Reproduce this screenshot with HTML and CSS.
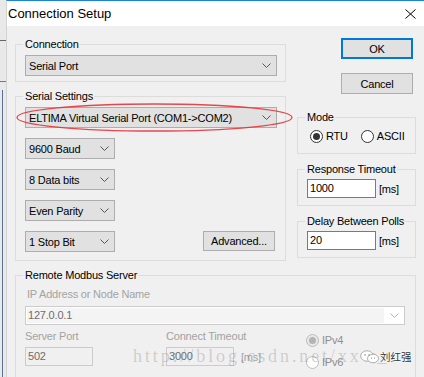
FILE: index.html
```html
<!DOCTYPE html>
<html lang="en">
<head>
<meta charset="utf-8">
<title>Connection Setup</title>
<link rel="stylesheet" href="styles.css">
</head>
<body>
<div class="desk">
  <div class="strip"></div>
  <div class="window">
    <div class="titlebar">
      <span class="title">Connection Setup</span>
      <svg class="close" width="11" height="10" viewBox="0 0 11 10"><path d="M0.5 0.5L10.5 9.5M10.5 0.5L0.5 9.5" stroke="#000" stroke-width="1" fill="none"/></svg>
    </div>
    <div class="client">
      <div class="top">
        <div class="col-left">
          <fieldset class="group g-conn">
            <legend>Connection</legend>
            <div class="combo first"><span>Serial Port</span><svg class="chev" width="9" height="5" viewBox="0 0 9 5"><path d="M0.5 0.5L4.5 4.5L8.5 0.5" stroke="#555" fill="none"/></svg></div>
          </fieldset>
          <fieldset class="group g-serial">
            <legend>Serial Settings</legend>
            <div class="combo first"><span>ELTIMA Virtual Serial Port (COM1-&gt;COM2)</span><svg class="chev" width="9" height="5" viewBox="0 0 9 5"><path d="M0.5 0.5L4.5 4.5L8.5 0.5" stroke="#555" fill="none"/></svg></div>
            <div class="combo small"><span>9600 Baud</span><svg class="chev" width="9" height="5" viewBox="0 0 9 5"><path d="M0.5 0.5L4.5 4.5L8.5 0.5" stroke="#555" fill="none"/></svg></div>
            <div class="combo small"><span>8 Data bits</span><svg class="chev" width="9" height="5" viewBox="0 0 9 5"><path d="M0.5 0.5L4.5 4.5L8.5 0.5" stroke="#555" fill="none"/></svg></div>
            <div class="combo small"><span>Even Parity</span><svg class="chev" width="9" height="5" viewBox="0 0 9 5"><path d="M0.5 0.5L4.5 4.5L8.5 0.5" stroke="#555" fill="none"/></svg></div>
            <div class="row-last">
              <div class="combo small flat"><span>1 Stop Bit</span><svg class="chev" width="9" height="5" viewBox="0 0 9 5"><path d="M0.5 0.5L4.5 4.5L8.5 0.5" stroke="#555" fill="none"/></svg></div>
              <button class="btn btn-adv" type="button">Advanced...</button>
            </div>
          </fieldset>
        </div>
        <div class="col-right">
          <button class="btn btn-ok" type="button">OK</button>
          <button class="btn btn-cancel" type="button">Cancel</button>
          <fieldset class="group g-mode">
            <legend>Mode</legend>
            <div class="radios">
              <span class="radio checked"></span><span class="rlabel">RTU</span>
              <span class="radio second"></span><span class="rlabel">ASCII</span>
            </div>
          </fieldset>
          <fieldset class="group g-field">
            <legend>Response Timeout</legend>
            <div class="field-row"><div class="input">1000</div><span class="unit">[ms]</span></div>
          </fieldset>
          <fieldset class="group g-field">
            <legend>Delay Between Polls</legend>
            <div class="field-row"><div class="input">20</div><span class="unit">[ms]</span></div>
          </fieldset>
        </div>
      </div>
      <fieldset class="group g-remote">
        <legend>Remote Modbus Server</legend>
        <div class="dlabel ip-label">IP Address or Node Name</div>
        <div class="ipcombo">
          <div class="ipval">127.0.0.1</div>
          <div class="ipdrop"><svg width="9" height="5" viewBox="0 0 9 5"><path d="M0.5 0.5L4.5 4.5L8.5 0.5" stroke="#b5b5b5" fill="none"/></svg></div>
        </div>
        <div class="row3">
          <div class="col-a">
            <div class="dlabel">Server Port</div>
            <div class="dinput">502</div>
          </div>
          <div class="col-b">
            <div class="dlabel">Connect Timeout</div>
            <div class="field-row dis-row"><div class="dinput">3000</div><span class="dunit">[ms]</span></div>
          </div>
          <div class="col-c">
            <div class="drow first"><span class="radio dis checked"></span><span class="drlabel">IPv4</span></div>
            <div class="drow"><span class="radio dis"></span><span class="drlabel">IPv6</span></div>
          </div>
        </div>
      </fieldset>
    </div>
  </div>

  <svg class="mark" width="285" height="36" viewBox="0 0 285 36"><ellipse cx="139.5" cy="17.5" rx="137.5" ry="13.5" fill="none" stroke="#e6343a" stroke-width="1.3" stroke-opacity="0.9"/></svg>
  <div class="watermark">http://blog.csdn.net/xxw_</div>
  <svg class="wlogo" width="20" height="14" viewBox="0 0 20 14"><ellipse cx="7" cy="6" rx="6.3" ry="5.2" fill="#fff" stroke="#9a9a9a" stroke-width="0.8"/><ellipse cx="13" cy="8.5" rx="5.5" ry="4.3" fill="#fff" stroke="#9a9a9a" stroke-width="0.8"/><circle cx="5" cy="5" r="0.8" fill="#888"/><circle cx="9" cy="5" r="0.8" fill="#888"/><circle cx="11.5" cy="8" r="0.6" fill="#888"/><circle cx="14.5" cy="8" r="0.6" fill="#888"/></svg>
  <div class="wname">刘红强</div>
</div>
</body>
</html>
```

FILE: styles.css
```css
* { box-sizing: border-box; }

html, body {
  margin: 0;
  padding: 0;
}

body {
  width: 424px;
  height: 377px;
  overflow: hidden;
  background: #e9e9e9;
  font-family: "Liberation Sans", Arial, sans-serif;
  font-size: 11px;
  color: #000;
}

.desk {
  position: relative;
  display: flex;
  height: 100%;
  overflow: hidden;
}

.strip {
  width: 6px;
  flex: none;
  background:
    linear-gradient(#58709a, #58709a) 2px 90px / 1px 100% no-repeat,
    linear-gradient(#666, #666) 0 40px / 6px 1px no-repeat,
    linear-gradient(#777, #777) 0 81px / 6px 1px no-repeat,
    #e9e9e9;
}

.window {
  flex: 1;
  min-width: 0;
  display: flex;
  flex-direction: column;
  background: #f0f0f0;
  border-left: 1px solid #d2d2d2;
  border-top: 1px solid #1883d7;
  overflow: hidden;
}

.titlebar {
  height: 25px;
  flex: none;
  background: #fff;
  display: flex;
  align-items: center;
  justify-content: space-between;
  padding-left: 1px;
  padding-right: 8px;
}

.title {
  font-size: 13px;
  line-height: 25px;
  color: #000;
}

.close { display: block; margin-top: 1px; }

.client {
  padding-left: 8px;
  letter-spacing: -0.2px;
}

.top {
  display: flex;
  gap: 11px;
}

.col-left {
  width: 271px;
  flex: none;
  display: flex;
  flex-direction: column;
}

.col-right {
  width: 119px;
  flex: none;
  display: flex;
  flex-direction: column;
}

.group {
  margin: 0;
  min-width: 0;
  border: 1px solid #dcdcdc;
  padding: 0 8px 0 9px;
}

.group legend {
  padding: 0 1px 0 2px;
  margin-left: -2px;
  line-height: 14px;
  font-size: 11px;
  white-space: nowrap;
}

.g-conn {
  margin-top: 11px;
  padding-bottom: 5px;
}

.g-serial {
  margin-top: 7px;
  padding-bottom: 8px;
}

.combo {
  height: 21px;
  margin-top: 10px;
  border: 1px solid #adadad;
  background: #e1e1e1;
  display: flex;
  align-items: center;
  justify-content: space-between;
  padding: 0 5px 0 3px;
  white-space: nowrap;
}

.combo.first { margin-top: 4px; }
.combo.small { width: 90px; }
.combo.flat { margin-top: 0; }

.chev { display: block; flex: none; }

.row-last {
  display: flex;
  justify-content: space-between;
  align-items: flex-start;
  margin-top: 10px;
}

.btn {
  width: 72px;
  height: 21px;
  margin: 0;
  padding: 0;
  border: 1px solid #adadad;
  background: #e1e1e1;
  font: inherit;
  letter-spacing: inherit;
  color: #000;
  display: flex;
  align-items: center;
  justify-content: center;
}

.btn-adv {
  height: 20px;
  margin-right: 2px;
}

.btn-ok {
  margin-top: 12px;
  margin-left: 44px;
  border: 2px solid #0078d7;
}

.btn-cancel {
  margin-top: 14px;
  margin-left: 44px;
}

.g-mode {
  margin-top: 16px;
  padding-top: 6px;
  padding-bottom: 10px;
}

.radios {
  display: flex;
  align-items: center;
  height: 13px;
  margin-left: 3px;
}

.radio {
  width: 13px;
  height: 13px;
  flex: none;
  border: 1px solid #333;
  border-radius: 50%;
  background: #fff;
  display: flex;
  align-items: center;
  justify-content: center;
}

.radio.checked::after {
  content: "";
  width: 7px;
  height: 7px;
  border-radius: 50%;
  background: #333;
}

.radio.second { margin-left: 13px; }

.rlabel { margin-left: 3px; line-height: 13px; }

.g-field {
  margin-top: 8px;
  padding-top: 3px;
  padding-bottom: 7px;
}

.field-row {
  display: flex;
  align-items: center;
}

.input {
  width: 69px;
  height: 19px;
  border: 1px solid #7a7a7a;
  background: #fff;
  padding-left: 2px;
  line-height: 17px;
}

.unit { margin-left: 3px; }

.g-remote {
  margin-top: 7px;
  width: 401px;
  padding: 5px 10px 30px 9px;
}

.dlabel {
  color: #a3a3a3;
  line-height: 14px;
}

.ip-label { padding-left: 2px; }

.ipcombo {
  margin-top: 5px;
  height: 19px;
  border: 1px solid #cccccc;
  background: #fff;
  padding: 1px 0 1px 1px;
  display: flex;
}

.ipval {
  flex: 1;
  background: #f4f4f4;
  color: #6d6d6d;
  line-height: 15px;
  padding-left: 1px;
}

.ipdrop {
  width: 20px;
  flex: none;
  display: flex;
  align-items: center;
  justify-content: center;
}

.row3 {
  display: flex;
  margin-top: 4px;
}

.col-a { width: 141px; flex: none; }
.col-b { width: 140px; flex: none; }

.dinput {
  width: 68px;
  height: 19px;
  margin-top: 4px;
  border: 1px solid #cccccc;
  background: #f0f0f0;
  color: #6d6d6d;
  padding-left: 2px;
  line-height: 17px;
}

.dis-row { align-items: flex-end; }

.dunit {
  margin-left: 7px;
  color: #a3a3a3;
  line-height: 17px;
}

.drow {
  display: flex;
  align-items: center;
  margin-top: 9px;
}

.drow.first { margin-top: 5px; }

.radio.dis {
  border-color: #bcbcbc;
  background: #fff;
}

.radio.dis.checked { background: #e8e8e8; }
.radio.dis.checked::after { background: #b4b4b4; }

.drlabel {
  margin-left: 3px;
  color: #8f8f8f;
  line-height: 13px;
}

.mark {
  position: absolute;
  left: 15px;
  top: 100px;
}

.watermark {
  position: absolute;
  left: 133px;
  top: 347px;
  font-family: "Liberation Serif", "Times New Roman", serif;
  font-size: 18px;
  line-height: 18px;
  letter-spacing: 2.9px;
  color: rgba(110, 110, 110, 0.28);
  white-space: nowrap;
}

.wlogo {
  position: absolute;
  left: 360px;
  top: 350px;
}

.wname {
  position: absolute;
  left: 380px;
  top: 350px;
  font-family: "Noto Sans CJK SC", sans-serif;
  font-size: 10.5px;
  line-height: 13px;
  color: #333;
  text-shadow: 0 0 2px #fff, 0 0 2px #fff, 0 0 1px #fff;
}
```
